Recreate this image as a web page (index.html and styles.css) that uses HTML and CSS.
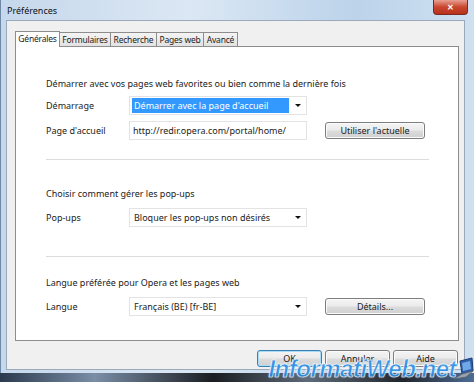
FILE: index.html
```html
<!DOCTYPE html>
<html lang="fr">
<head>
    <meta charset="UTF-8">
    <title>Préférences</title>
    <link rel="stylesheet" href="styles.css">
</head>
<body>
    <div class="window">
        <div class="titlebar">
            <span class="title">Préférences</span>
            <span class="close-btn">&#x2715;</span>
        </div>

        <div class="client">
            <div class="tabs">
                <span class="tab active t-gen">Générales</span>
                <span class="tab t-form">Formulaires</span>
                <span class="tab t-rech">Recherche</span>
                <span class="tab t-pages">Pages web</span>
                <span class="tab t-av">Avancé</span>
            </div>

            <div class="panel">
                <!-- Démarrage -->
                <div class="section first">
                    <p class="intro">Démarrer avec vos pages web favorites ou bien comme la dernière fois</p>
                    <div class="row">
                        <span class="label">Démarrage</span>
                        <div class="select">
                            <span class="value selected">Démarrer avec la page d'accueil</span>
                            <span class="arrow"></span>
                        </div>
                    </div>
                    <div class="row">
                        <span class="label">Page d'accueil</span>
                        <div class="input">http://redir.opera.com/portal/home/</div>
                        <button class="btn">Utiliser l'actuelle</button>
                    </div>
                </div>

                <hr class="sep sep-one">

                <!-- Pop-ups -->
                <div class="section second">
                    <p class="intro">Choisir comment gérer les pop-ups</p>
                    <div class="row">
                        <span class="label">Pop-ups</span>
                        <div class="select">
                            <span class="value">Bloquer les pop-ups non désirés</span>
                            <span class="arrow"></span>
                        </div>
                    </div>
                </div>

                <hr class="sep sep-two">

                <!-- Langue -->
                <div class="section third">
                    <p class="intro">Langue préférée pour Opera et les pages web</p>
                    <div class="row">
                        <span class="label">Langue</span>
                        <div class="select">
                            <span class="value">Français (BE) [fr-BE]</span>
                            <span class="arrow"></span>
                        </div>
                        <button class="btn">Détails...</button>
                    </div>
                </div>
            </div>

            <div class="dialog-buttons">
                <button class="btn default">OK</button>
                <button class="btn">Annuler</button>
                <button class="btn">Aide</button>
            </div>
        </div>

        <div class="watermark">
            <span class="wm-text">InformatiWeb.net</span>
            <svg class="wm-icon" width="20" height="26" viewBox="0 0 20 26">
                <path d="M6 4 L18 1 L19 14 L8 17 Z" fill="#2f5fa8" stroke="#1c3d73" stroke-width="1"/>
                <path d="M8 6 L16 4 L17 12 L9 14 Z" fill="#6fa8e8"/>
                <path d="M0 22 L8 17 L19 14 L12 20 Z" fill="#9aa3ad" stroke="#5d6670" stroke-width="0.8"/>
            </svg>
        </div>
    </div>
    <div class="desktop"></div>
</body>
</html>
```

FILE: styles.css
```css
body {
    margin: 0;
    width: 474px;
    height: 382px;
    overflow: hidden;
    background: #2b2f36;
    font-family: "Noto Sans", "Open Sans", sans-serif;
    font-size: 9px;
    color: #1b1b1b;
}

.window {
    position: relative;
    height: 373px;
    padding: 20px 9px 3px 5px;
    box-sizing: border-box;
    background: linear-gradient(to right, #c6d8ec, #dbe7f4 40%, #bcd3ea 75%, #cfe0f1);
    border-left: 1px solid #6f8aa8;
}

.titlebar {
    position: absolute;
    top: 0;
    left: 0;
    right: 0;
    height: 20px;
}

.title {
    position: absolute;
    left: 6px;
    top: 4px;
    font-size: 9px;
    color: #111;
}

/* red close button of the frame */
.close-btn {
    position: absolute;
    top: 0;
    right: 6px;
    width: 35px;
    height: 15px;
    border: 1px solid #7a2a20;
    border-top: none;
    border-radius: 0 0 4px 4px;
    background: linear-gradient(#e8a092, #c9462f 50%, #b8321c);
    color: #fff;
    font-size: 8px;
    font-weight: bold;
    text-align: center;
    line-height: 14px;
    box-sizing: border-box;
}

.client {
    height: 100%;
    background: #f0f0f0;
    border: 1px solid #9aaabb;
    box-sizing: border-box;
    padding: 10px 6px 0 8px;
    display: flex;
    flex-direction: column;
}

.tabs {
    display: flex;
    height: 15px;
    align-items: flex-end;
}

.tab {
    height: 14px;
    padding: 0;
    border: 1px solid #8d8d8d;
    border-bottom: none;
    border-left: none;
    background: linear-gradient(#f4f4f4, #e2e2e2);
    font-size: 8.5px;
    letter-spacing: -0.2px;
    line-height: 14px;
    text-align: center;
    box-sizing: border-box;
}

.tab.active {
    height: 16px;
    border-left: 1px solid #8d8d8d;
    background: #fff;
    margin-bottom: -1px;
    position: relative;
}

.t-gen { width: 45px; }
.t-form { width: 51px; }
.t-rech { width: 46px; }
.t-pages { width: 47px; }
.t-av { width: 34px; }

.panel {
    width: 444px;
    height: 295px;
    background: #fff;
    border: 1px solid #8d8d8d;
    box-sizing: border-box;
    padding: 0 29px 0 30px;
}

.intro {
    margin: 0 0 7px;
    line-height: 14px;
}

.section.first { padding-top: 30px; }
.section.first .intro { margin-bottom: 5px; }
.section.second { padding-top: 27px; }
.section.third { padding-top: 19px; }

.row {
    display: flex;
    align-items: center;
    height: 19px;
    margin-bottom: 6px;
}

.label {
    width: 83px;
    flex: none;
}

.select,
.input {
    width: 178px;
    height: 19px;
    flex: none;
    box-sizing: border-box;
    border: 1px solid #e3e3e3;
    background: #fff;
    display: flex;
    align-items: center;
    padding: 0 2px;
}

.select .value {
    flex: 1;
    padding-left: 2px;
    line-height: 15px;
}

.select .value.selected {
    background: #3399ff;
    color: #fff;
    margin-right: 6px;
}

.arrow {
    width: 0;
    height: 0;
    border-left: 3px solid transparent;
    border-right: 3px solid transparent;
    border-top: 3px solid #111;
    margin: 0 3px 0 0;
}

.input {
    padding-left: 3px;
}

.btn {
    font-family: inherit;
    font-size: 9px;
    color: #1b1b1b;
    width: 100px;
    height: 17px;
    margin-left: 18px;
    padding: 0;
    border: 1px solid #7d7d7d;
    border-radius: 3px;
    background: linear-gradient(#f4f4f4, #ebebeb 48%, #dcdcdc 52%, #d0d0d0);
    box-shadow: inset 0 0 0 1px #fbfbfb;
}

.sep {
    margin: 0;
    border: none;
    border-top: 1px solid #dcdcdc;
}

.sep-one { margin-top: 19px; }
.sep-two { margin-top: 29px; }

.dialog-buttons {
    display: flex;
    justify-content: flex-end;
    gap: 3px;
    margin-top: 9px;
}

.dialog-buttons .btn {
    width: 65px;
    height: 17px;
    margin: 0;
}

.dialog-buttons .btn.default {
    border-color: #3c7fb1;
    box-shadow: inset 0 0 0 1px #a8dcf6;
}

/* site watermark over the corner */
.watermark {
    position: absolute;
    right: 0;
    bottom: -10px;
    display: flex;
    align-items: flex-end;
}

.wm-text {
    font-family: "Liberation Sans", sans-serif;
    font-size: 24px;
    font-style: italic;
    font-weight: bold;
    color: #2b8ee6;
    letter-spacing: -0.5px;
    -webkit-text-stroke: 0.6px #fff;
    text-shadow: 0 0 2px #fff;
    opacity: 0.9;
}

.wm-icon {
    margin-left: -2px;
}

.desktop {
    height: 9px;
    background: linear-gradient(to right, #2b3a4d, #7a8ea6 20%, #1a1d22 45%, #5e6b7a 65%, #20252c 85%, #4d6d95);
}
```
